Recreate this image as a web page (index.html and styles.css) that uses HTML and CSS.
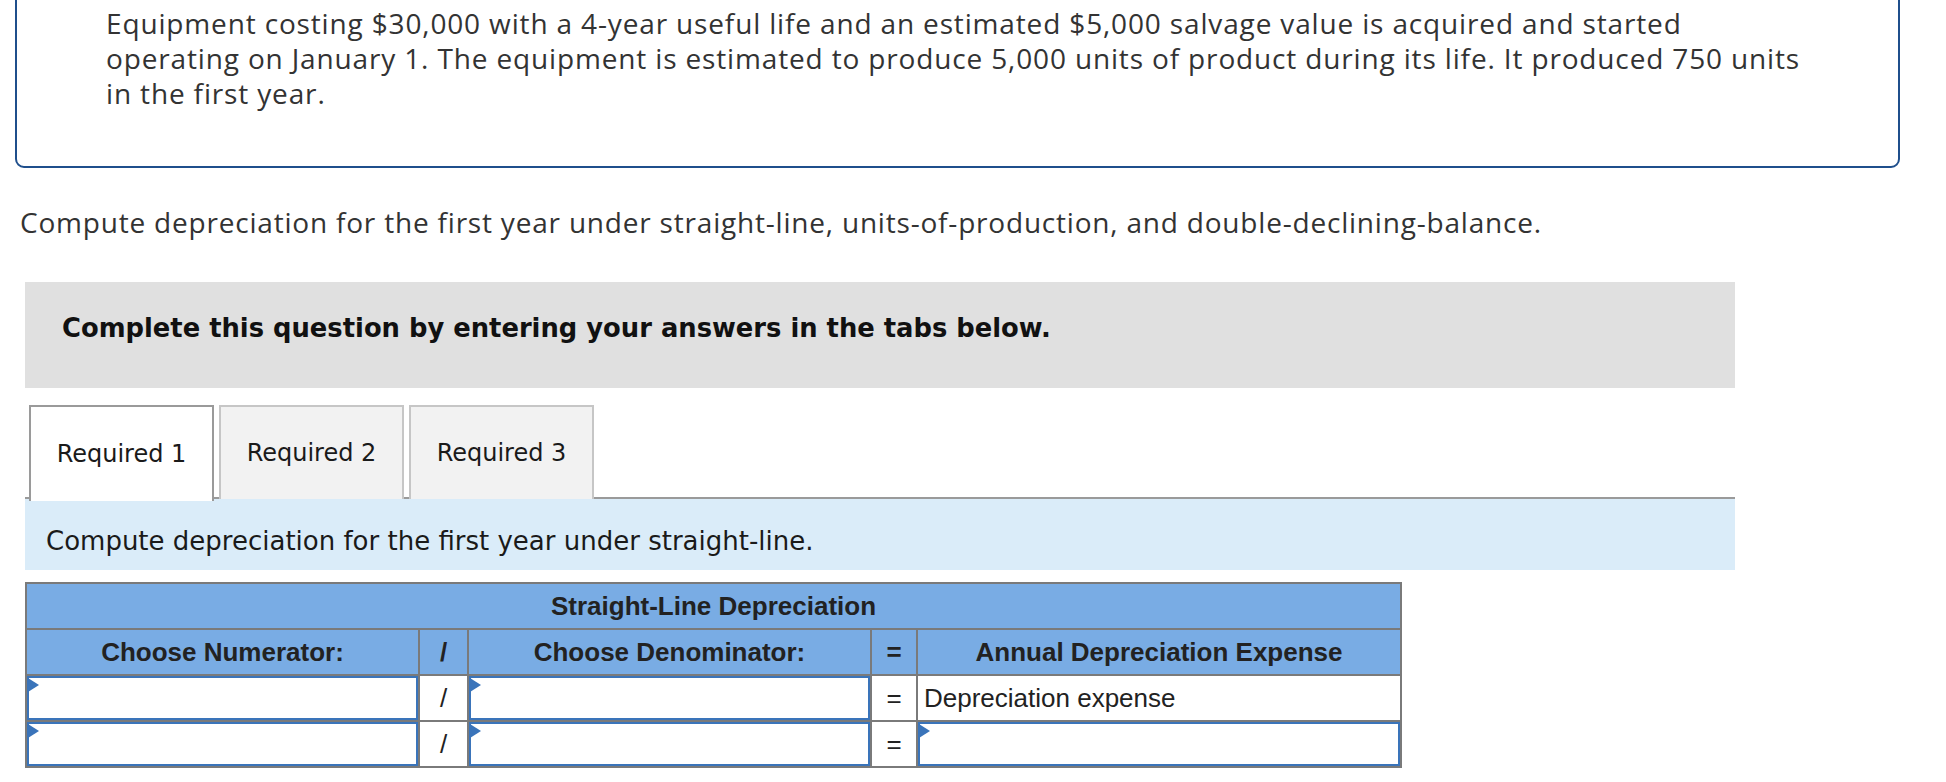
FILE: index.html
```html
<!DOCTYPE html>
<html lang="en">
<head>
<meta charset="utf-8">
<title>Depreciation</title>
<link rel="stylesheet" href="styles.css">
</head>
<body>
<div class="page">
  <div class="scenario">
    <p class="scenario-text">Equipment costing $30,000 with a 4-year useful life and an estimated $5,000 salvage value is acquired and started<br>operating on January 1. The equipment is estimated to produce 5,000 units of product during its life. It produced 750 units<br>in the first year.</p>
  </div>

  <p class="prompt">Compute depreciation for the first year under straight-line, units-of-production, and double-declining-balance.</p>

  <div class="instructions">Complete this question by entering your answers in the tabs below.</div>

  <div class="tabs">
    <div class="tab tab-active">Required 1</div>
    <div class="tab">Required 2</div>
    <div class="tab">Required 3</div>
  </div>

  <div class="panel">Compute depreciation for the first year under straight-line.</div>

  <table class="sheet">
    <colgroup>
      <col class="c-num">
      <col class="c-op">
      <col class="c-den">
      <col class="c-eq">
      <col class="c-res">
    </colgroup>
    <tr class="head">
      <th colspan="5">Straight-Line Depreciation</th>
    </tr>
    <tr class="head">
      <th>Choose Numerator:</th>
      <th>/</th>
      <th>Choose Denominator:</th>
      <th>=</th>
      <th>Annual Depreciation Expense</th>
    </tr>
    <tr>
      <td class="in"><div class="field"><span class="flag"></span></div></td>
      <td class="op">/</td>
      <td class="in"><div class="field"><span class="flag"></span></div></td>
      <td class="op">=</td>
      <td class="label">Depreciation expense</td>
    </tr>
    <tr>
      <td class="in"><div class="field"><span class="flag"></span></div></td>
      <td class="op">/</td>
      <td class="in"><div class="field"><span class="flag"></span></div></td>
      <td class="op">=</td>
      <td class="in"><div class="field"><span class="flag"></span></div></td>
    </tr>
  </table>
</div>
</body>
</html>
```

FILE: styles.css
```css
html, body {
  margin: 0;
  padding: 0;
  background: #ffffff;
}

.page {
  width: 1946px;
  height: 782px;
  overflow: hidden;
  font-family: "Open Sans", "Liberation Sans", sans-serif;
  color: #333333;
}

.scenario {
  margin: -20px 0 0 15px;
  width: 1885px;
  height: 188px;
  border: 2px solid #1f4f8c;
  border-radius: 9px;
  box-sizing: border-box;
  padding: 0 0 0 89px;
}

.scenario-text {
  margin: 0;
  padding-top: 24px;
  width: 1780px;
  font-size: 28px;
  line-height: 35px;
  letter-spacing: 0.85px;
}

.prompt {
  margin: 0;
  padding: 37px 0 0 20px;
  font-size: 28px;
  line-height: 35px;
  letter-spacing: 0.8px;
}

.instructions {
  margin: 42px 0 0 25px;
  width: 1710px;
  height: 106px;
  box-sizing: border-box;
  background: #e0e0e0;
  padding: 31px 0 0 37px;
  font-family: "DejaVu Sans", Verdana, sans-serif;
  font-weight: bold;
  font-size: 25.8px;
  line-height: 30px;
  color: #111111;
}

.tabs {
  display: flex;
  gap: 5px;
  margin: 15px 0 0 25px;
  width: 1710px;
  padding-left: 4px;
  box-sizing: border-box;
  border-bottom: 2px solid #9a9a9a;
  height: 96px;
}

.tab {
  width: 185px;
  height: 94px;
  box-sizing: border-box;
  border: 2px solid #c6c6c6;
  border-bottom: none;
  background: #f2f2f2;
  display: flex;
  align-items: center;
  justify-content: center;
  font-family: "DejaVu Sans", Verdana, sans-serif;
  font-size: 24px;
  color: #1a1a1a;
  margin-top: 2px;
}

.tab-active {
  background: #ffffff;
  border-color: #9a9a9a;
  height: 96px;
  position: relative;
  z-index: 1;
}

.panel {
  margin: 0 0 0 25px;
  width: 1710px;
  height: 71px;
  box-sizing: border-box;
  background: #daecf9;
  padding: 27px 0 0 21px;
  font-family: "DejaVu Sans", Verdana, sans-serif;
  font-size: 26px;
  line-height: 30px;
  color: #1a1a1a;
}

.sheet {
  margin: 12px 0 0 25px;
  border-collapse: collapse;
  border: 2px solid #7a7a7a;
  font-family: "Liberation Sans", Arial, sans-serif;
  font-size: 26px;
  color: #222222;
  table-layout: fixed;
  width: 1375px;
}

.c-num { width: 393px; }
.c-op { width: 49px; }
.c-den { width: 403px; }
.c-eq { width: 46px; }
.c-res { width: 484px; }

.sheet tr {
  height: 46px;
}

.sheet th,
.sheet td {
  border: 2px solid #7a7a7a;
  height: 46px;
  padding: 0;
  box-sizing: border-box;
}

.sheet th {
  background: #79ace4;
  font-weight: bold;
  text-align: center;
}

.sheet td.op {
  text-align: center;
  background: #ffffff;
}

.sheet td.label {
  text-align: left;
  padding-left: 6px;
}

.field {
  position: relative;
  height: 44px;
  box-sizing: border-box;
  border: 2px solid #3a74ba;
  background: #ffffff;
}

.flag {
  position: absolute;
  left: -1px;
  top: 0;
  width: 0;
  height: 0;
  border-top: 7px solid transparent;
  border-bottom: 7px solid transparent;
  border-left: 11px solid #3a74ba;
}
```
